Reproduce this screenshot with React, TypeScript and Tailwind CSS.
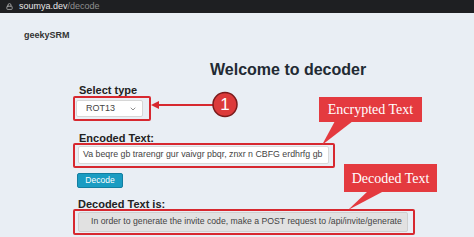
import { ChevronDown, Lock } from "lucide-react";

function Callout({
  label,
  className,
  tip,
}: {
  label: string;
  className: string;
  tip: string;
}) {
  return (
    <div className={`absolute ${className}`}>
      <svg className="absolute inset-0 overflow-visible" width="100%" height="100%">
        <polygon points={tip} fill="#e43a3f" />
      </svg>
      <div className="relative flex h-full items-center justify-center bg-[#e43a3f] font-['Liberation_Serif'] text-[14px] text-white">
        {label}
      </div>
    </div>
  );
}

export default function App() {
  return (
    <div className="relative h-[237px] w-[474px] overflow-hidden bg-[#e9eef4] font-['Liberation_Sans',Arial,sans-serif] text-[#222]">
      <div className="flex h-[13px] items-center gap-[4px] bg-[#1e1f22] pl-[6px] text-[9px] leading-none">
        <Lock className="h-[7px] w-[7px] text-[#aaa]" strokeWidth={3} />
        <span className="pl-[2px] text-[#e8e8e8]">
          soumya.dev<span className="text-[#8f8f8f]">/decode</span>
        </span>
      </div>

      <div className="mt-[16px] pl-[24px] text-[9px] font-bold leading-[12px] text-[#333]">
        geekySRM
      </div>

      <div className="pl-[73px]">
        <h1 className="mt-[20px] pl-[137px] text-[16px] font-bold leading-[18px] text-[#222a33]">
          Welcome to decoder
        </h1>

        <div className="mt-[5px] pl-[6px] text-[11px] font-bold leading-[13px]">Select type</div>
        <div className="mt-[-1px] h-[25px] w-[78px] rounded-[2px] border-2 border-[#d7282f] pl-[1px] pt-[2px]">
          <div className="flex h-[17px] w-[67px] items-center justify-between rounded-[2px] border border-[#d6d6d6] bg-white pl-[9px] pr-[5px] text-[9px] text-[#444]">
            ROT13
            <ChevronDown className="h-[8px] w-[8px] text-[#777]" strokeWidth={2.5} />
          </div>
        </div>

        <div className="mt-[11px] pl-[6px] text-[11px] font-bold leading-[13px]">Encoded Text:</div>
        <div className="mt-[-2px] h-[25px] w-[262px] rounded-[2px] border-2 border-[#d7282f] pl-[3px] pt-[1px]">
          <div className="flex h-[18px] w-[251px] items-center rounded-[2px] border border-[#d9d9d9] bg-white pl-[4px] text-[8.8px] text-[#444]">
            Va beqre gb trarengr gur vaivgr pbqr, znxr n CBFG erdhrfg gb
          </div>
        </div>

        <button className="mt-[5px] ml-[4px] flex h-[15px] w-[46px] items-center justify-center rounded-[2px] border border-[#137ea0] bg-[#1a9cc2] text-[8.5px] text-white">
          Decode
        </button>

        <div className="mt-[10px] pl-[5px] text-[11px] font-bold leading-[13px]">Decoded Text is:</div>
        <div className="mt-[-2px] h-[26px] w-[342px] rounded-[2px] border-2 border-[#d7282f] pl-[3px] pt-[1px]">
          <div className="flex h-[20px] w-[330px] items-center rounded-[2px] border border-[#cfcfcf] bg-[#e1e1e1] pl-[12px] text-[8.7px] text-[#444]">
            In order to generate the invite code, make a POST request to /api/invite/generate
          </div>
        </div>
      </div>

      <svg className="absolute left-[150px] top-[91px]" width="92" height="28">
        <line x1="6" y1="14" x2="64" y2="14" stroke="#d7282f" strokeWidth="2" />
        <polygon points="1,14 9,10 9,18" fill="#d7282f" />
        <circle cx="75" cy="13.5" r="12" fill="#dc3a3a" stroke="#7a1b1b" strokeWidth="1.5" />
        <text x="75" y="19" textAnchor="middle" fontSize="17" fill="#fff" fontFamily="Liberation Sans">
          1
        </text>
      </svg>

      <Callout
        label="Encrypted Text"
        className="left-[319px] top-[97px] h-[25px] w-[103px]"
        tip="16,24 34,24 3,48"
      />
      <Callout
        label="Decoded Text"
        className="left-[344px] top-[164px] h-[28px] w-[93px]"
        tip="24,27 40,27 4,46"
      />
    </div>
  );
}
